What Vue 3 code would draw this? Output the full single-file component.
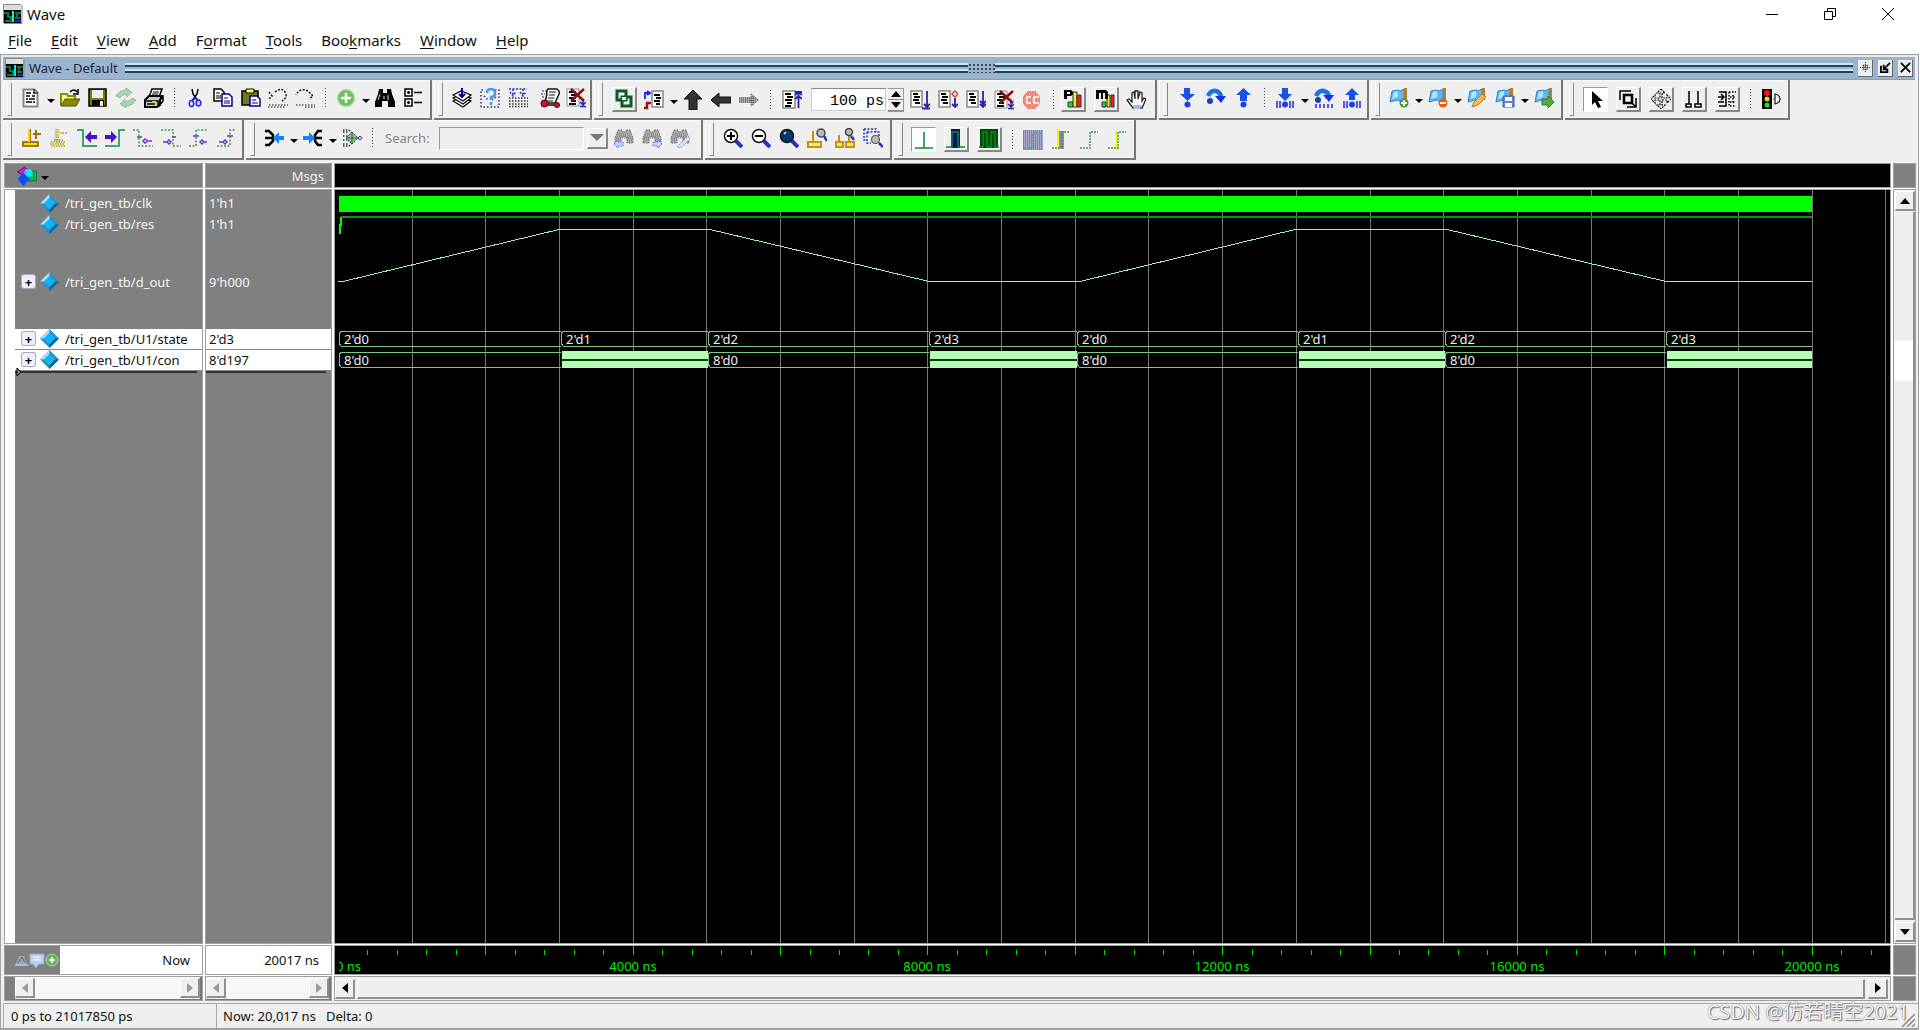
<script setup>
import { ref } from 'vue'

const menus = [
  ['', 'F', 'ile'],
  ['', 'E', 'dit'],
  ['', 'V', 'iew'],
  ['', 'A', 'dd'],
  ['F', 'o', 'rmat'],
  ['', 'T', 'ools'],
  ['Boo', 'k', 'marks'],
  ['', 'W', 'indow'],
  ['', 'H', 'elp']
]

// "|" is a separator, "v" a small drop-down arrow, "*" prefixes a raised button, "_" a pressed one
const topBars = [
  { id: 'file', items: ['doc', 'v', 'open', 'save', 'reload', 'print', '|', 'cut', 'copy', 'paste', 'undo', 'redo', '|', 'add', 'v', 'find', 'tree'] },
  { id: 'compile', items: ['layers', 'ask', 'compileall', 'sim', 'stopsim'] },
  { id: 'simulate', items: ['*env', 'wavedoc', 'v', 'up', 'left', 'right', '|', 'restart', 'time', 'run', 'runcont', 'runall', 'break', 'stop', '|', '*profp', '*profm', 'hand'] },
  { id: 'step', items: ['stepin', 'stepover', 'stepout', '|', 'stepinc', 'v', 'stepoverc', 'stepoutc'] },
  { id: 'mark', items: ['bmadd', 'v', 'bmdel', 'v', 'bmedit', 'bmsave', 'v', 'bmgo'] },
  { id: 'mode', items: ['_pointer', '*zoommode', '*pan', '*cursors', '*edges', '|', 'light'] }
]
const bottomBars = [
  { id: 'cursor', items: ['curadd', 'curdel', 'prevedge', 'nextedge', 'fallprev', 'fallnext', 'riseprev', 'risenext'] },
  { id: 'search', items: ['expand', 'v', 'collapse', 'v', 'expandall', '|', 'searchbox', 'findprev', 'findnext', 'findopt'] },
  { id: 'zoom', items: ['zoomin', 'zoomout', 'zoomfull', 'zoomcur', 'zoomtwo', 'zoomsel'] },
  { id: 'shape', items: ['_shape1', '*shape2', '*shape3', '|', 'shape4', 'shape5', 'shape6', 'shape7'] }
]
const rows = [topBars, bottomBars]
const iconName = (n) => n.replace(/^[*_]/, '')
const kind = (n) => (n[0] === '*' ? 'raised' : n[0] === '_' ? 'pressed' : '')

const runTime = ref('100 ps')
const query = ref('')

const signals = [
  { path: '/tri_gen_tb/clk', value: "1'h1", cls: 'one' },
  { path: '/tri_gen_tb/res', value: "1'h1", cls: 'one' },
  { path: '/tri_gen_tb/d_out', value: "9'h000", cls: 'tall', bus: true },
  { path: '/tri_gen_tb/U1/state', value: "2'd3", cls: 'sel', bus: true },
  { path: '/tri_gen_tb/U1/con', value: "8'd197", cls: 'sel', bus: true }
]

// time axis: x position of a moment given in units of 1000 ns
const x = (t) => Math.round(3 + t * 73.68)
const grid = Array.from({ length: 21 }, (_, i) => i + 1)
const ticks = Array.from({ length: 52 }, (_, i) => ({ x: x((i + 1) * 0.4), major: (i + 1) % 5 === 0 }))
const labels = [4, 8, 12, 16, 20]
const end = x(20)
const analog = [[0, 91], [0.1, 91], [3.02, 39], [5.02, 39], [8, 91], [10.1, 91], [13.02, 39], [15.02, 39], [18, 91], [20, 91]]
  .map(([t, y]) => `${x(t)},${y}`).join(' ')
const edges = [0, 3, 5, 8, 10, 13, 15, 18, 20]
const states = edges.slice(0, -1).map((t, i) => ({
  a: x(t) + (i ? 2 : 1),
  b: i === 7 ? end : x(edges[i + 1]) + 2,
  text: `2'd${i % 4}`,
  busy: i % 2 === 1
}))
const outline = (s, top) => {
  const b = top + 15
  return `M${s.b} ${top}H${s.a + 2}L${s.a} ${top + 3}V${b - 3}L${s.a + 2} ${b}H${s.b}`
}
</script>

<template>
  <svg class="defs" aria-hidden="true">
    <symbol id="wave" viewBox="0 0 20 20"><path d="M1 1h17v18H1z" fill="#000" /><path d="M1 1h17v5H1z" fill="#ddd" /><path d="M1 9h4v4h3v5M12 9h6M12 14h5M2 17h5M14 9v4" stroke="#0a7a3c" stroke-width="2" fill="none" /><path d="M10 7v11" stroke="#0ee" stroke-width="2" /><path d="M12 17h6" stroke="#22c" stroke-width="2" /><path d="M.5 19V.5H18M19 1v18.5H1" stroke="#888" fill="none" /></symbol>
    <symbol id="doc" viewBox="0 0 20 20"><path d="M2.500 1.500h11l3 3v14h-14z" fill="#fff" stroke="#888" stroke-width="2" /><path d="M5 5h5m2 0h2M5 8h4m2 0h3M5 11h2m1 0h6M5 14h6m1 0h2" stroke="#000" stroke-width="1.500" /><path d="M13 1v4h4" stroke="#000" fill="none" /></symbol>
    <symbol id="open" viewBox="0 0 20 20"><path d="M1 18V6h6l1 2h7v4" fill="#ffff9a" stroke="#8a8a00" stroke-width="2" /><path d="M1 18l4-7h15l-4 7z" fill="#8a8a00" stroke="#555500" /><path d="M10 4q4-4 7 0M18 1v5h-5" fill="none" stroke="#000" stroke-width="1.500" /></symbol>
    <symbol id="save" viewBox="0 0 20 20"><path d="M1 1h17v17H1z" fill="#808000" stroke="#000" stroke-width="1.500" /><path d="M4 2h11v8H4z" fill="#efefef" /><path d="M4 12h12v6H4z" fill="#000" /><path d="M12 13h3v5h-3z" fill="#eee" /></symbol>
    <symbol id="reload" viewBox="0 0 20 20"><g fill="#a6d4b2" stroke="#6fb583" stroke-dasharray="2 1"><path d="M0 8q4-6 10-6V0l6 4-5 5V7Q6 6 4 10z" /><path d="M20 12q-4 6-10 6v2l-6-4 5-5v2q5 1 7-3z" /></g></symbol>
    <symbol id="print" viewBox="0 0 20 20"><path d="M5 9l3-8h10l-3 8z" fill="#fff" stroke="#000" stroke-width="1.500" /><path d="M9 4h6M8 6h6" stroke="#000" /><path d="M1 12l4-4h13l-2 4v5l-3 2H1z" fill="#ccc" stroke="#000" stroke-width="2" /><path d="M1 13h13v5M3 16h8M16 12l3-3v4l-4 5" stroke="#000" stroke-width="1.500" fill="none" /><path d="M8 14h4" stroke="#dd0" stroke-width="2" /></symbol>
    <symbol id="cut" viewBox="0 0 20 20"><path d="M7 1l1 5 5 7M13 1l-1 5-5 7" stroke="#000" stroke-width="1.500" fill="none" /><g fill="none" stroke="#22f" stroke-width="1.600"><ellipse cx="6.500" cy="15.500" rx="2.200" ry="3" /><ellipse cx="13.500" cy="15" rx="2.200" ry="3" /><path d="M8 12l2-2 2 2" /></g></symbol>
    <symbol id="copy" viewBox="0 0 20 20"><path d="M1 1h7l3 3v9H1z" fill="#fff" stroke="#000" stroke-width="1.500" /><path d="M3 5h4M3 8h5M3 10h5" stroke="#000" /><path d="M9 6h7l3 3v9H9z" fill="#fff" stroke="#000080" stroke-width="1.500" /><path d="M11 10h4M11 13h6M11 15h6" stroke="#000080" /></symbol>
    <symbol id="paste" viewBox="0 0 20 20"><path d="M1 3h16v14H1z" fill="#77772a" stroke="#000" stroke-width="1.500" /><path d="M5 1h8v4H5z" fill="#ff6" stroke="#000" /><path d="M9 8h7l3 3v7H9z" fill="#fff" stroke="#000080" stroke-width="1.500" /><path d="M11 12h4M11 15h6" stroke="#000080" /></symbol>
    <symbol id="undo" viewBox="0 0 20 20"><path d="M1 4l3 4-3 3M7 4q8-6 11 2 1 4-4 7" fill="none" stroke="#111" stroke-width="1.500" stroke-dasharray="2 1.500" /><path d="M1 17h19M0 19h18" stroke="#111" stroke-width="1.200" stroke-dasharray="1.500 1.500" /></symbol>
    <symbol id="redo" viewBox="0 0 20 20"><path d="M14 4l4 4-4 3M13 3q-8-4-12 4" fill="none" stroke="#111" stroke-width="1.500" stroke-dasharray="2 1.500" /><path d="M1 17h19M10 19h10" stroke="#111" stroke-width="1.200" stroke-dasharray="1.500 1.500" /></symbol>
    <symbol id="add" viewBox="0 0 20 20"><circle cx="10" cy="10" r="8.500" fill="#6fbf5c" stroke="#b4dba8" stroke-width="1.500" /><path d="M10 5v10M5 10h10" stroke="#fff" stroke-width="2.500" /></symbol>
    <symbol id="find" viewBox="0 0 20 20"><path d="M4 1h4v4h4V1h4l1 5 3 8v5h-7v-6H7v6H0v-5l3-8z" fill="#000" /><path d="M3 12l2-6M9 8v3M13 12V7" stroke="#ddd" /></symbol>
    <symbol id="tree" viewBox="0 0 20 20"><path d="M2 1h7v7H2zM2 11h7v7H2z" fill="#fff" stroke="#000" stroke-width="1.500" /><path d="M4 4.500h3M5.500 3v3M4 14.500h3M5.500 13v3M11 4.500h8M11 14.500h8" stroke="#000" stroke-width="1.500" /></symbol>
    <symbol id="layers" viewBox="0 0 20 20"><g fill="#fff" stroke="#000" stroke-width="1.200"><path d="M1 13l8-4 10 4-8 6z" /><path d="M1 10l8-4 10 4-8 6z" /><path d="M1 7l8-4 10 4-8 6z" /></g><path d="M10 0v9M7 6l3 3 3-3" stroke="#000090" stroke-width="2" fill="none" /></symbol>
    <symbol id="ask" viewBox="0 0 20 20"><path d="M1 19V2h4M15 2h4v17H1M4 8l4 4M16 9l-4 3" fill="none" stroke="#335" stroke-width="1.500" stroke-dasharray="1.500 2" /><path d="M7 5q0-4 4-4t4 4-4 4v3m0 2v3" fill="none" stroke="#39a0f0" stroke-width="2.500" /></symbol>
    <symbol id="compileall" viewBox="0 0 20 20"><path d="M1 10h19M1 13h19M1 16h19M1 18.500h19" stroke="#333" stroke-width="1.500" stroke-dasharray="1.500 1.500" /><path d="M5 1v6M15 1v6M2 4l3 4 3-4M12 4l3 4 3-4M1 1h18" stroke="#3030b0" stroke-width="1.500" stroke-dasharray="2 1.500" fill="none" /></symbol>
    <symbol id="sim" viewBox="0 0 20 20"><path d="M8 1h9q3 2 2 5l-4 9H5l2-9q-1-3 1-5z" fill="#fff" stroke="#111" stroke-width="1.500" /><path d="M9 4h7M9 7h6M8 10h6M7 13h6" stroke="#111" /><path d="M2 3h4M1 6h4M2 9h3" stroke="#22a" stroke-dasharray="2 1" /><circle cx="4.500" cy="15.500" r="3.500" fill="#d01030" stroke="#500" /><circle cx="17" cy="17" r="2.500" fill="#d01030" stroke="#500" /><path d="M8 17h6" stroke="#111" stroke-width="1.500" /></symbol>
    <symbol id="stopsim" viewBox="0 0 20 20"><path d="M1 1h12v17H1z" fill="#fff" stroke="#888" /><path d="M3 4h7M5 7h6M3 10h7M5 13h5M3 16h7" stroke="#000" stroke-width="1.800" /><path d="M5 1l13 12M18 1L5 13" stroke="#8b1010" stroke-width="2.500" /><path d="M17 11v6M14 14l3 3 3-3M14 18.500h6" stroke="#22a" stroke-width="1.500" fill="none" /></symbol>
    <symbol id="env" viewBox="0 0 20 20"><path d="M3 2h9v9H3zM8 8h9v9H8z" fill="none" stroke="#0a5c22" stroke-width="3" /><path d="M8 8h4v3H8z" fill="#fff" /></symbol>
    <symbol id="wavedoc" viewBox="0 0 20 20"><path d="M8 1h11v16H8z" fill="#fff" stroke="#888" stroke-width="1.500" /><path d="M10 5h6M12 8h5M10 11h6M12 14h4" stroke="#000" stroke-width="1.800" /><path d="M1 9V3h5M3 1l3 2-3 2" stroke="#22e" stroke-width="1.800" fill="none" /><path d="M0 18h3v-5h4" stroke="#a01010" stroke-width="2.500" fill="none" /></symbol>
    <symbol id="up" viewBox="0 0 20 20"><path d="M10 0l9 9h-5v11H6V9H1z" fill="#333" stroke="#111" /></symbol>
    <symbol id="left" viewBox="0 0 20 20"><path d="M0 10l8-7v4h12v6H8v4z" fill="#333" stroke="#111" /></symbol>
    <symbol id="right" viewBox="0 0 20 20"><path d="M20 10l-8-7v4H0v6h12v4z" fill="#aaa" /><g fill="none" stroke="#555" stroke-dasharray="1 1"><path d="M0 8h17M0 10h20M0 12h17M12 4v12M14 6v9" /></g></symbol>
    <symbol id="restart" viewBox="0 0 20 20"><path d="M1 1h12v17H1z" fill="#fff" stroke="#888" stroke-width="1.500" /><path d="M3 4h6M5 7h6M3 10h7M5 13h5M3 16h6" stroke="#000" stroke-width="1.800" /><path d="M13 2h7M13 5l3.500-3 3.500 3M16.500 3v15M13 9l3.500-3L20 9" stroke="#22a" stroke-width="1.800" fill="none" /></symbol>
    <symbol id="run" viewBox="0 0 20 20"><path d="M1 1h11v16H1z" fill="#fff" stroke="#888" stroke-width="1.500" /><path d="M3 4h5M4 7h6M3 10h6M5 13h5" stroke="#000" stroke-width="1.800" /><path d="M17 1v16M14 14l3 3 3-3M12 18.500h8" stroke="#22a" stroke-width="1.800" fill="none" /></symbol>
    <symbol id="runcont" viewBox="0 0 20 20"><path d="M1 1h11v16H1z" fill="#fff" stroke="#888" stroke-width="1.500" /><path d="M3 4h5M4 7h6M3 10h6M5 13h5" stroke="#000" stroke-width="1.800" /><path d="M17 1l3 3-3 3-3-3z" fill="#fff" stroke="#e33" stroke-width="1.500" /><path d="M17 8v9M14 14l3 3 3-3" stroke="#22a" stroke-width="1.800" fill="none" /></symbol>
    <symbol id="runall" viewBox="0 0 20 20"><path d="M1 1h11v16H1z" fill="#fff" stroke="#888" stroke-width="1.500" /><path d="M3 4h5M4 7h6M3 10h6M5 13h5" stroke="#000" stroke-width="1.800" /><path d="M17 1v16M14 11l3 3 3-3M14 14l3 3 3-3" stroke="#22a" stroke-width="1.800" fill="none" /></symbol>
    <symbol id="break" viewBox="0 0 20 20"><path d="M1 1h12v17H1z" fill="#fff" stroke="#888" /><path d="M3 4h7M5 7h6M3 10h7M5 13h5M3 16h7" stroke="#000" stroke-width="1.800" /><path d="M6 1l13 12M19 1L6 13" stroke="#8b1010" stroke-width="2.500" /><path d="M17 11v6M14 14l3 3 3-3M14 18.500h6" stroke="#22a" stroke-width="1.500" fill="none" /></symbol>
    <symbol id="stop" viewBox="0 0 20 20"><path d="M6 1h7l5 5v8l-5 5H6l-5-5V6z" fill="#f7a99c" /><g fill="none" stroke="#e8482e" stroke-width="1.200" stroke-dasharray="1.500 1"><path d="M5 2h9M3 4h13M2 6h15M1 8h17M1 10h17M1 12h17M2 14h15M3 16h13M5 18h9" /></g><path d="M9 7H5v6h4M17 7h-5v6h5" stroke="#fff" stroke-width="1.500" fill="none" /></symbol>
    <symbol id="profp" viewBox="0 0 20 20"><path d="M5 13h5v5H5z" fill="#1d3" stroke="#333" /><path d="M10 3h4v15h-4z" fill="#ee2" stroke="#333" /><path d="M14 6h4v12h-4z" fill="#e22" stroke="#333" /><path d="M1 1h6q3 0 3 3t-3 3H4v3H1z" fill="#000" /><path d="M4 3h3v2H4z" fill="#fff" /></symbol>
    <symbol id="profm" viewBox="0 0 20 20"><path d="M6 13h4v5H6z" fill="#1d3" stroke="#333" /><path d="M11 6h3v12h-3z" fill="#ee2" stroke="#333" /><path d="M15 6h3v12h-3z" fill="#e22" stroke="#333" /><path d="M0 1h10l2 2v7H9V4H7v6H5V4H3v6H0z" fill="#000" /></symbol>
    <symbol id="hand" viewBox="0 0 20 20"><path d="M7 18L1 10l2-1 3 3V3l2-1 1 7V1h3v8l2-7 2 1v8l2-3 2 1-4 9z" fill="#fff" stroke="#222" stroke-width="1.300" /><path d="M7 15h9l-2 4H8z" fill="#9bc0ea" /></symbol>
    <symbol id="stepin" viewBox="0 0 20 20"><path d="M6 0h6v6h5l-7.500 7L2 6h4z" fill="#1b50e8" /><circle cx="9.500" cy="16.500" r="3" fill="#1b40e8" /></symbol>
    <symbol id="stepover" viewBox="0 0 20 20"><path d="M2 8q3-6 8-5 4 1 5 6" fill="none" stroke="#1b70f0" stroke-width="4.500" /><path d="M9 8h11l-5 7z" fill="#1b30e0" /><circle cx="4" cy="13" r="3" fill="#1b40a8" /></symbol>
    <symbol id="stepout" viewBox="0 0 20 20"><path d="M9.500 0L17 7h-4v6H6V7H2z" fill="#1b50e8" /><circle cx="9.500" cy="16.500" r="3" fill="#1b40e8" /></symbol>
    <symbol id="stepinc" viewBox="0 0 20 20"><path d="M7 0h6v6h4l-7 7-7-7h4z" fill="#1b50e8" /><circle cx="10" cy="16.500" r="3" fill="#1b40e8" /><path d="M2 13v7M5 13v7M15 13v7M18 13v7" stroke="#22e" stroke-width="1.500" /></symbol>
    <symbol id="stepoverc" viewBox="0 0 20 20"><path d="M2 8q3-6 8-5 4 1 5 5" fill="none" stroke="#1b70f0" stroke-width="4.500" /><path d="M9 7h11l-5 7z" fill="#1b30e0" /><circle cx="4" cy="12" r="3" fill="#1b40a8" /><path d="M2 16v4M6 16v4M10 16v4M14 16v4M18 16v4" stroke="#22e" stroke-width="1.500" /></symbol>
    <symbol id="stepoutc" viewBox="0 0 20 20"><path d="M10 0l7 7h-4v5H7V7H3z" fill="#1b50e8" /><circle cx="10" cy="16.500" r="3" fill="#1b40e8" /><path d="M2 13v7M5 13v7M15 13v7M18 13v7" stroke="#22e" stroke-width="1.500" /></symbol>
    <symbol id="flag" viewBox="0 0 20 20"><path d="M3 3l6-1 2 1 4-2v11l-4 1-3-1-7 2z" fill="#62b6f2" stroke="#2b86cc" /><path d="M5 4l4-1v6l-6 2z" fill="#b8e2ff" /><path d="M15 0h3v12h-3z" fill="#b87a30" /></symbol>
    <symbol id="bmadd" viewBox="0 0 20 20"><use href="#flag" /><circle cx="15" cy="15" r="4.500" fill="#3f9a35" /><path d="M15 12v6M12 15h6" stroke="#fff" stroke-width="1.800" /></symbol>
    <symbol id="bmdel" viewBox="0 0 20 20"><use href="#flag" /><circle cx="15" cy="15" r="4.500" fill="#ea5a14" /><path d="M12 15h6" stroke="#fff" stroke-width="1.800" /></symbol>
    <symbol id="bmedit" viewBox="0 0 20 20"><use href="#flag" /><path d="M5 19l2-5 8-8 4 3-8 8z" fill="#f4b942" stroke="#c07d1c" /></symbol>
    <symbol id="bmsave" viewBox="0 0 20 20"><use href="#flag" /><path d="M8 8h11v11H8z" fill="#5d86cc" stroke="#3b62a8" /><path d="M10 9h7v4h-7zM10 15h7v4h-7z" fill="#fff" /></symbol>
    <symbol id="bmgo" viewBox="0 0 20 20"><use href="#flag" /><path d="M8 11h6V8l6 6-6 6v-3H8z" fill="#52ab42" stroke="#2f7d25" /></symbol>
    <symbol id="pointer" viewBox="0 0 20 20"><path d="M6 2v14l3-3 3 6 3-1-3-6h5z" fill="#000" /></symbol>
    <symbol id="zoommode" viewBox="0 0 20 20"><path d="M2 11V2h11" stroke="#000" stroke-width="1.500" fill="none" /><path d="M6 6h8v8H6z" stroke="#000" stroke-width="2.500" fill="none" /><path d="M18 9v9H9M14 14l4 4" stroke="#000" stroke-width="1.500" fill="none" /></symbol>
    <symbol id="pan" viewBox="0 0 20 20"><path d="M10 0l4 4h-3v5h5V6l4 4-4 4v-3h-5v5h3l-4 4-4-4h3v-5H4v3l-4-4 4-4v3h5V4H6z" fill="none" stroke="#111" stroke-width="1.200" stroke-dasharray="2 1" /></symbol>
    <symbol id="cursors" viewBox="0 0 20 20"><path d="M5 2v13M14 2v13" stroke="#000" stroke-width="1.500" /><path d="M2 15h5v3H2zM11 15h6v3h-6z" fill="#fff" stroke="#000" stroke-width="1.500" /></symbol>
    <symbol id="edges" viewBox="0 0 20 20"><path d="M2 3h7v14H2M1 8h6M4 5l3 3-3 3M1 13h6" stroke="#000" stroke-width="1.500" fill="none" /><path d="M12 3h7M12 3v14h7M13 8h6M13 13h6M16 6v9" stroke="#000" stroke-width="1.500" fill="none" stroke-dasharray="1.500 1.500" /></symbol>
    <symbol id="light" viewBox="0 0 20 20"><path d="M1 0h10v20H1z" fill="#000" /><circle cx="6" cy="4" r="3" fill="#f11" /><circle cx="6" cy="10" r="2.500" fill="#ec2" /><circle cx="6" cy="16" r="2.500" fill="#2d4" /><path d="M14 5q5 1 5 5t-5 5z" fill="#fff" stroke="#111" stroke-width="1.200" /><path d="M12 10h1m6 0h1" stroke="#07a" /></symbol>
    <symbol id="curadd" viewBox="0 0 20 20"><path d="M9 1v13M12 6h8M15 2v9" stroke="#9a7000" stroke-width="2" /><path d="M2 14h15v4H2z" fill="#ffd800" stroke="#7a5a00" stroke-width="1.500" /><path d="M8 1v13" stroke="#ffd800" stroke-width="2" /></symbol>
    <symbol id="curdel" viewBox="0 0 20 20"><g fill="none" stroke="#b89a10" stroke-width="1.500" stroke-dasharray="1.500 1"><path d="M9 1v13M7 1v12M11 5h8M2 14h15M1 16h15M2 18h15M5 12h9" /></g></symbol>
    <symbol id="prevedge" viewBox="0 0 20 20"><path d="M0 2h6v16h14" stroke="#0a8a3c" stroke-width="1.500" fill="none" /><path d="M8 9l6-6v4h6v4h-6v4z" fill="#4a10d0" /></symbol>
    <symbol id="nextedge" viewBox="0 0 20 20"><path d="M0 18h14V2h6" stroke="#0a8a3c" stroke-width="1.500" fill="none" /><path d="M12 9L6 3v4H0v4h6v4z" fill="#4a10d0" /></symbol>
    <symbol id="fallprev" viewBox="0 0 20 20"><path d="M0 2h6v16h14" stroke="#3a9a50" stroke-width="1.500" stroke-dasharray="2 1.500" fill="none" /><path d="M4 9h5M12 11l3 2-3 2-2-2zM16 13h3" stroke="#63c" stroke-width="1.500" fill="none" /></symbol>
    <symbol id="fallnext" viewBox="0 0 20 20"><path d="M0 2h12v16h8" stroke="#3a9a50" stroke-width="1.500" stroke-dasharray="2 1.500" fill="none" /><path d="M2 14h4l2-2 2 2-2 2-2-2M11 9h4" stroke="#63c" stroke-width="1.500" fill="none" /></symbol>
    <symbol id="riseprev" viewBox="0 0 20 20"><path d="M0 18h7V2h12" stroke="#3a9a50" stroke-width="1.500" stroke-dasharray="2 1.500" fill="none" /><path d="M4 8h6M11 14l2-2 2 2-2 2zM15 14h3" stroke="#63c" stroke-width="1.500" fill="none" /></symbol>
    <symbol id="risenext" viewBox="0 0 20 20"><path d="M0 18h13V2h6" stroke="#3a9a50" stroke-width="1.500" stroke-dasharray="2 1.500" fill="none" /><path d="M2 14h4l2-2 2 2-2 2-2-2M10 8h6" stroke="#63c" stroke-width="1.500" fill="none" /></symbol>
    <symbol id="expand" viewBox="0 0 20 20"><path d="M1 3h4l4 4v6l-4 4H1M1 10h8" stroke="#000" stroke-width="2.500" fill="none" /><path d="M9 10l6-6v4h5v4h-5v4z" fill="#1284ff" /></symbol>
    <symbol id="collapse" viewBox="0 0 20 20"><path d="M19 3h-4l-3 4v6l3 4h4M12 10h7" stroke="#000" stroke-width="2.500" fill="none" /><path d="M12 10L6 4v4H0v4h6v4z" fill="#1284ff" /></symbol>
    <symbol id="expandall" viewBox="0 0 20 20"><path d="M1 2h6l3 3M1 18h6l3-3M1 8h5M1 12h5M1 4h5M1 16h5" stroke="#333" stroke-width="1.500" stroke-dasharray="1.500 1.500" fill="none" /><path d="M10 4l6 6-6 6-6-6z" fill="#8ac890" stroke="#333" stroke-dasharray="2 1" /><path d="M10 5v10M5 10h10" stroke="#264" /><path d="M18 8l2 2-2 2-2-2z" fill="none" stroke="#22e" /></symbol>
    <symbol id="glass" viewBox="0 0 20 20"><path d="M4 2h4v2h4V2h4l3 8v5h-6V9H7v6H1v-5z" fill="#aaa" stroke="#666" stroke-dasharray="1.500 1" /><path d="M3 6h14M3 8h14M2 10h16M2 12h5M13 12h5" stroke="#777" stroke-dasharray="1 1" /></symbol>
    <symbol id="findprev" viewBox="0 0 20 20"><use href="#glass" /><path d="M0 16l4-4v2h5v4H4v2z" fill="#c8d4ff" stroke="#46f" stroke-dasharray="1.500 1" /></symbol>
    <symbol id="findnext" viewBox="0 0 20 20"><use href="#glass" /><path d="M20 16l-4-4v2h-5v4h5v2z" fill="#c8d4ff" stroke="#46f" stroke-dasharray="1.500 1" /></symbol>
    <symbol id="findopt" viewBox="0 0 20 20"><use href="#glass" /><path d="M7 19L18 8l2 3-9 9z" fill="#cde4f8" stroke="#8ab" stroke-dasharray="2 1" /></symbol>
    <symbol id="zoomin" viewBox="0 0 20 20"><path d="M13 13l6 6" stroke="#2233cc" stroke-width="4" /><circle cx="8" cy="8" r="6.500" fill="#fff" stroke="#111" stroke-width="1.500" /><path d="M4 8h8M8 4v8" stroke="#000" stroke-width="2" /></symbol>
    <symbol id="zoomout" viewBox="0 0 20 20"><path d="M13 13l6 6" stroke="#2233cc" stroke-width="4" /><circle cx="8" cy="8" r="6.500" fill="#fff" stroke="#111" stroke-width="1.500" /><path d="M4 8h8" stroke="#000" stroke-width="2" /></symbol>
    <symbol id="zoomfull" viewBox="0 0 20 20"><path d="M13 13l6 6" stroke="#2233cc" stroke-width="4" /><circle cx="8" cy="8" r="6.500" fill="#003a70" stroke="#111" stroke-width="1.500" /><path d="M5 6l2-2" stroke="#fff" stroke-width="1.500" /></symbol>
    <symbol id="zoomcur" viewBox="0 0 20 20"><path d="M6 3v11M1 14h13v5H1z" fill="#ffe680" stroke="#c89200" stroke-width="2" /><path d="M17 8l3 5" stroke="#23c" stroke-width="2.500" /><circle cx="14" cy="5" r="4" fill="#bbb" stroke="#444" stroke-width="1.500" /></symbol>
    <symbol id="zoomtwo" viewBox="0 0 20 20"><path d="M4 7v7M14 7v7M1 14h7v5H1zM11 14h8v5h-8z" fill="#ffe680" stroke="#c89200" stroke-width="2" /><path d="M16 8l3 4" stroke="#23c" stroke-width="2.500" /><circle cx="14" cy="4" r="3.500" fill="#bbb" stroke="#444" stroke-width="1.500" /></symbol>
    <symbol id="zoomsel" viewBox="0 0 20 20"><path d="M1 1h12v3M1 1v11h3M4 4h12v4M4 4v11h4" stroke="#33a" stroke-width="1.500" stroke-dasharray="2 1.500" fill="none" /><path d="M16 15l4 4" stroke="#23c" stroke-width="2.500" /><circle cx="12.500" cy="11.500" r="4" fill="#bbb" stroke="#555" stroke-width="1.200" /></symbol>
    <symbol id="shape1" viewBox="0 0 20 20"><path d="M10 2v16M1 18h18" stroke="#0a8a2c" stroke-width="1.500" /></symbol>
    <symbol id="shape2" viewBox="0 0 20 20"><path d="M5 0h9v19H5z" fill="#101070" /><path d="M0 18h6V3h6v15h7" stroke="#0a8a2c" stroke-width="1.500" fill="none" /></symbol>
    <symbol id="shape3" viewBox="0 0 20 20"><path d="M1 0h18v19H1z" fill="#004a00" /><path d="M0 18h4V3h4v15h4V3h4v15h4" stroke="#0a8a2c" stroke-width="1.500" fill="none" /></symbol>
    <symbol id="shape4" viewBox="0 0 20 20"><path d="M0 0h20v20H0z" fill="#a8a8cc" /><g stroke="#5a5a9a" stroke-width="1" stroke-dasharray="1 1"><path d="M0 1h20M0 3h20M0 5h20M0 7h20M0 9h20M0 11h20M0 13h20M0 15h20M0 17h20M0 19h20" /></g><path d="M1 18h9V3h9" stroke="#5a9a7a" stroke-width="1.500" fill="none" stroke-dasharray="2 1" /></symbol>
    <symbol id="shape5" viewBox="0 0 20 20"><path d="M7 1h6v18H7z" fill="#8a8ab8" /><path d="M7 0v20" stroke="#fe0" stroke-width="2" /><path d="M1 18h7M11 18V2h7" stroke="#3a9a50" stroke-width="1.500" fill="none" stroke-dasharray="2 1" /></symbol>
    <symbol id="shape6" viewBox="0 0 20 20"><path d="M1 18h10V2h8" stroke="#3a9a50" stroke-width="1.500" fill="none" stroke-dasharray="2 1" /></symbol>
    <symbol id="shape7" viewBox="0 0 20 20"><path d="M10 1v18" stroke="#fe0" stroke-width="2" /><path d="M1 18h10V2h8" stroke="#3a9a50" stroke-width="1.500" fill="none" stroke-dasharray="2 1" /></symbol>
    <symbol id="gem" viewBox="0 0 20 20"><path d="M10 0l10 10-10 10L0 10z" fill="#2392cf" /><path d="M10 0v10H0z" fill="#a8ddf2" /><path d="M10 20l10-10H10z" fill="#0c6290" /><path d="M10 4l6 6-6 6-6-6z" fill="#14b4f4" /></symbol>
  </svg>

  <div class="window">
    <header class="titlebar">
      <svg class="logo"><use href="#wave" /></svg>
      <h1>Wave</h1>
      <button class="caption" aria-label="Minimize"><svg viewBox="0 0 14 14"><path d="M1 7.500h12" /></svg></button>
      <button class="caption" aria-label="Restore"><svg viewBox="0 0 14 14"><path d="M1.500 4.500h8v8h-8zM4.500 4V1.500h8v8H10" /></svg></button>
      <button class="caption" aria-label="Close"><svg viewBox="0 0 14 14"><path d="M1 1l12 12M13 1L1 13" /></svg></button>
    </header>

    <nav class="menubar">
      <button v-for="m in menus" :key="m.join('')">{{ m[0] }}<u>{{ m[1] }}</u>{{ m[2] }}</button>
    </nav>

    <main class="dock">
      <div class="docktitle">
        <svg class="logo"><use href="#wave" /></svg>
        <h2>Wave - Default</h2>
        <span class="grip"></span>
        <span class="dots"></span>
        <span class="grip"></span>
        <button aria-label="Zoom pane"><svg viewBox="0 0 12 12"><path d="M6 0v12M0 6h12M4 3v6M8 3v6M3 4h6M3 8h6" stroke="#000" stroke-dasharray="1 1" /></svg></button>
        <button aria-label="Dock"><svg viewBox="0 0 12 12"><path d="M1 4v7h7V8M11 1L5 7M4 3v5h5" stroke="#000" stroke-width="2" fill="none" /></svg></button>
        <button aria-label="Close pane"><svg viewBox="0 0 12 12"><path d="M1 1l10 10M11 1L1 11" stroke="#000" stroke-width="2" /></svg></button>
      </div>

      <div v-for="(bars, r) in rows" :key="r" class="toolrow">
        <div v-for="bar in bars" :key="bar.id" class="bar" :class="bar.id" role="toolbar">
          <template v-for="(it, i) in bar.items" :key="i">
            <span v-if="it === '|'" class="sep"></span>
            <button v-else-if="it === 'v'" class="caret" aria-label="More"></button>
            <div v-else-if="it === 'time'" class="time">
              <input v-model="runTime" aria-label="Run length" />
              <div class="spin"><button aria-label="Longer"></button><button class="down" aria-label="Shorter"></button></div>
            </div>
            <div v-else-if="it === 'searchbox'" class="searchbox">
              <label for="q">Search:</label>
              <input id="q" v-model="query" />
              <button class="drop" aria-label="Search history"><i></i></button>
            </div>
            <button v-else class="tool" :class="[kind(it), iconName(it)]" :aria-label="iconName(it)"><svg><use :href="'#' + iconName(it)" /></svg></button>
          </template>
        </div>
      </div>

      <section class="panes">
        <div class="cell head">
          <svg class="shapes" viewBox="0 0 20 20"><path d="M1 6l7-5 6 5-6 4z" fill="#c020e0" stroke="#707" /><path d="M12 5h8v10h-8z" fill="#18b040" stroke="#075" /><circle cx="12" cy="7" r="4" fill="#0ef" /><path d="M7 7l6 6-6 7-6-7z" fill="#0a50ee" /></svg>
          <button class="caret" aria-label="Columns"></button>
        </div>
        <div class="cell head msgs">Msgs</div>
        <div class="cell black"></div>
        <div class="cell head"></div>

        <div class="cell names">
          <div v-for="s in signals" :key="s.path" class="sig" :class="s.cls">
            <button v-if="s.bus" class="plus" aria-label="Expand signal">+</button>
            <span v-else class="noplus"></span>
            <svg class="gem"><use href="#gem" /></svg>
            <span>{{ s.path }}</span>
          </div>
          <div class="insert"><svg viewBox="0 0 6 10"><path d="M1 1l4 4-4 4z" fill="#888" stroke="#000" /></svg></div>
        </div>
        <div class="cell values">
          <div v-for="s in signals" :key="s.path" class="sig" :class="s.cls">{{ s.value }}</div>
          <div class="insert"></div>
        </div>
        <div class="cell black">
          <svg class="trace">
            <path v-for="g in grid" :key="g" :d="`M${x(g)}.5 0V4000`" stroke="#767676" />
            <rect x="4" y="6" :width="end - 4" height="16" fill="#0f0" />
            <path :d="`M5 44V34M6 36V27`" fill="none" stroke="#0f0" stroke-width="2" />
            <path :d="`M6 27H${end}`" fill="none" stroke="#00a000" stroke-width="2" />
            <polyline :points="analog" fill="none" stroke="#a8f0a8" />
            <template v-for="s in states" :key="s.a">
              <path :d="outline(s, 141)" class="bus" />
              <path v-if="!s.busy" :d="outline(s, 162)" class="bus" />
              <template v-else>
                <rect :x="s.a + 1" y="161" :width="s.b - s.a - 1" height="17" fill="#b4ffb4" />
                <path :d="`M${s.a} 170H${s.b}`" stroke="#103810" stroke-width="2" />
              </template>
              <text :x="s.a + 5" y="154">{{ s.text }}</text>
              <text v-if="!s.busy" :x="s.a + 5" y="175">8'd0</text>
            </template>
          </svg>
        </div>
        <div class="cell vbar">
          <button class="arrow up" aria-label="Scroll up"></button>
          <div class="vthumb"><i></i></div>
          <button class="arrow dn" aria-label="Scroll down"></button>
        </div>

        <div class="cell now"><div class="nowicons"><svg viewBox="0 0 46 18"><path d="M2 13l3-8h5l3 8z" fill="#a4a4a8" /><path d="M4 12l4-6 3 6" stroke="#666" fill="none" /><path d="M1 14h13" stroke="#9cc0ee" stroke-width="2" /><path d="M16 3h14v10h-5l-3 4-3-4h-3z" fill="#b9d0f0" stroke="#88a8dd" /><path d="M19 6h8M19 9h8" stroke="#fff" /><circle cx="38" cy="9" r="6" fill="#62b850" stroke="#a8dca0" /><path d="M38 6v6M35 9h6" stroke="#fff" stroke-width="2" /></svg></div><span>Now</span></div>
        <div class="cell now"><span>20017 ns</span></div>
        <div class="cell black">
          <svg class="trace">
            <path v-for="t in ticks" :key="t.x" :d="`M${t.x}.5 ${t.major ? 0 : 4}V9`" stroke="#00e000" />
            <text v-for="l in labels" :key="l" class="axis" text-anchor="middle" :x="x(l)" y="25">{{ l * 1000 }} ns</text>
            <text class="axis" text-anchor="end" x="26" y="25">0 ns</text>
            <rect width="4" height="28" fill="#000" />
          </svg>
        </div>
        <div class="cell head"></div>

        <div class="cell hbar off inset"><button class="arrow lf" aria-label="Scroll left"></button><div class="track"></div><button class="arrow rt" aria-label="Scroll right"></button></div>
        <div class="cell hbar off"><button class="arrow lf" aria-label="Scroll left"></button><div class="track"></div><button class="arrow rt" aria-label="Scroll right"></button></div>
        <div class="cell hbar"><button class="arrow lf" aria-label="Scroll left"></button><div class="thumb"></div><button class="arrow rt" aria-label="Scroll right"></button></div>
        <div class="cell head"></div>
      </section>

      <footer class="status">
        <span class="range">0 ps to 21017850 ps</span>
        <span class="sim">Now: 20,017 ns&nbsp;&nbsp; Delta: 0</span>
        <svg class="resize" viewBox="0 0 14 14"><path d="M1 14L14 1M6 14l8-8M11 14l3-3" stroke="#888" stroke-width="1.500" /></svg>
        <span class="credit">CSDN @仿若晴空2021</span>
      </footer>
    </main>
  </div>
</template>

<style>
body { background: #fff; }
</style>

<style scoped>
* { box-sizing: border-box; }
.defs { position: absolute; width: 0; height: 0; }
button { border: 0; padding: 0; margin: 0; background: none; font: inherit; color: inherit; flex: none; }
input { border: 0; outline: 0; min-width: 0; }
h1, h2 { margin: 0; font-weight: 400; }
.window { display: flex; flex-direction: column; min-height: 100vh; font-family: "Noto Sans", "Noto Sans CJK SC", sans-serif; font-size: 13px; color: #111; }

.titlebar { display: flex; align-items: center; height: 28px; padding: 0 3px; }
.logo { width: 20px; height: 20px; flex: none; }
.titlebar h1 { flex: 1; font-size: 15px; margin-left: 4px; }
.caption { width: 58px; height: 28px; display: grid; place-items: center; }
.caption svg { width: 14px; height: 14px; fill: none; stroke: #000; }
.menubar { display: flex; gap: 19px; height: 26px; padding-left: 8px; font-size: 15px; line-height: 24px; }
.menubar button { align-self: flex-start; }
.menubar u { text-underline-offset: 2px; }

.dock { flex: 1; display: flex; flex-direction: column; background: #efefef; border: solid #a0a0a0; border-width: 1px 1px 2px; margin-right: 1px; }
.docktitle { display: flex; align-items: center; height: 25px; background: #99b4d1; border-top: 2px solid #e8e8e8; border-bottom: 1px solid #999; margin: 0 3px 0 2px; padding: 0 2px; }
.docktitle h2 { font-size: 13px; margin: 0 7px 0 4px; color: #223; }
.grip { height: 10px; flex: 61; border: solid #2c3e50; border-width: 0 0 2px; background: linear-gradient(#bfe8f8 0 2px, #2c3e50 2px 4px, #99b4d1 4px 6px, #bfe8f8 6px 8px); }
.grip + .dots { width: 27px; height: 10px; flex: none; background: radial-gradient(circle, #445 1px, transparent 1px) 0 0 / 4px 4px; }
.dots + .grip { flex: 62; margin-right: 5px; }
.docktitle button { width: 15px; height: 17px; margin-right: 5px; background: #eee; display: grid; place-items: center; border-right: 1px solid #666; border-bottom: 1px solid #666; }
.docktitle button:last-child { margin-right: 0; }
.docktitle button svg { width: 11px; height: 11px; }

.toolrow { display: flex; gap: 2px; height: 40px; padding-left: 2px; }
.bar { display: flex; align-items: center; flex: none; position: relative; border: solid #777; border-width: 0 2px 2px 0; padding: 0 0 2px 14px; box-shadow: inset 1px 1px #fff; }
.bar::before { content: ""; position: absolute; left: 4px; top: 3px; bottom: 2px; width: 3px; border: solid #888; border-width: 0 1px 1px 0; border-left: 1px solid #fff; }
.tool { width: 28px; height: 28px; display: grid; place-items: center; }
.tool svg { width: 20px; height: 20px; display: block; }
.undo { width: 26px; }
.sep { width: 13px; height: 20px; flex: none; background: repeating-linear-gradient(#444 0 1px, transparent 1px 3px) center / 1px 100% no-repeat; }
.caret { width: 11px; height: 28px; display: grid; place-items: center; }
.caret::before { content: ""; border: solid transparent; border-width: 4px 4px 0; border-top-color: #000; margin-top: 5px; }
.raised, .pressed { width: 25px; height: 25px; margin-right: 8px; }
.raised { border: 1px solid #fff; border-right: 2px solid #888; border-bottom: 2px solid #888; }
.pressed { background: #fff; border: 1px solid #999; border-right-color: #fff; border-bottom-color: #fff; }
.file { width: 429px; }
.compile { width: 158px; }
.simulate { width: 563px; padding-left: 18px; padding-top: 3px; }
.simulate .env { margin-right: 3px; }
.simulate .profm { margin-right: 3px; }
.simulate .sep { width: 15px; }
.step { width: 210px; }
.step .tool:first-child { margin-left: 1px; }
.mark { width: 192px; padding-left: 14px; }
.mode { width: 225px; padding-left: 18px; padding-top: 2px; }
.mode .edges { margin-right: 4px; }
.cursor { width: 241px; }
.search { width: 457px; }
.zoom { width: 187px; }
.shape { width: 242px; padding-left: 17px; padding-top: 3px; }
.shape .shape3 { margin-right: 4px; }
.time { display: flex; align-items: center; margin: 0 2px 0 5px; }
.time input { width: 75px; height: 23px; text-align: right; font: 15px "Liberation Mono", monospace; background: #fff; border: 1px solid #ccc; border-top-color: #888; padding: 3px 1px 0 0; }
.spin { width: 17px; height: 24px; display: flex; flex-direction: column; margin-left: 1px; border: 1px solid #999; border-left-color: #fff; }
.spin button { flex: 1; display: grid; place-items: center; border-bottom: 1px solid #888; }
.spin button::before, .arrow::before { content: ""; border: solid transparent; border-width: 0 5px 6px; border-bottom-color: #000; }
.spin .down::before { transform: rotate(180deg); }
.searchbox { display: flex; align-items: center; margin: 0 2px 0 6px; }
.searchbox label { width: 54px; color: #848484; }
.searchbox input { width: 145px; height: 23px; background: #efefef; border: 1px solid #999; border-right-color: #fff; border-bottom-color: #fff; }
.drop { width: 21px; height: 21px; margin-left: 3px; border: 1px solid #fff; border-right: 2px solid #888; border-bottom: 2px solid #888; display: grid; place-items: center; }
.drop i { border: solid transparent; border-width: 7px 7px 0; border-top-color: #777; }

.panes { flex: 1; display: grid; grid-template-columns: 197px 125px minmax(0, 1fr) 21px; grid-template-rows: 23px minmax(200px, 1fr) 28px 23px; gap: 3px 4px; margin: 4px 3px 0 3px; padding: 0 0 0 1px; background: #fff; }
.cell { min-width: 0; box-shadow: 0 0 0 1px #a0a0a0; background: #808080; overflow: hidden; }
.head { display: flex; align-items: center; padding-left: 11px; color: #f4f4f4; }
.shapes { width: 21px; height: 20px; }
.head .caret { margin-left: 2px; }
.msgs { justify-content: flex-end; padding-right: 7px; }
.black { background: #000; }
.names { border-left: 10px solid #fff; overflow: visible; color: #f4f4f4; }
.values { color: #f4f4f4; }
.names .sig { padding-left: 7px; }
.values .sig { padding-left: 3px; }
.sig { display: flex; align-items: center; height: 21px; padding-bottom: 1px; white-space: nowrap; }
.names .sig:first-child, .values .sig:first-child { margin-top: 3px; }
.tall { height: 94px; }
.sel { background: #fff; color: #111; border-bottom: 1px solid #888; }
.gem { width: 19px; height: 19px; flex: none; margin: 0 6px 0 5px; }
.plus { width: 13px; height: 13px; background: #eef; border-radius: 2px; box-shadow: 0 0 0 1px #aab; color: #000; line-height: 12px; font-weight: 700; }
.noplus { width: 13px; }
.insert { height: 2px; margin-right: 5px; background: #333; position: relative; }
.insert svg { position: absolute; width: 6px; height: 10px; left: 1px; top: -4px; }
.trace { display: block; width: 100%; height: 100%; font-size: 13px; shape-rendering: crispEdges; }
.trace text { fill: #f0f0f0; }
.trace .axis { fill: #00e800; }
.bus { fill: none; stroke: #7cc87c; stroke-width: 1; }

.now { background: #fff; display: flex; align-items: center; justify-content: flex-end; padding-right: 12px; }
.nowicons { background: #808080; width: 55px; align-self: stretch; margin-right: auto; display: flex; align-items: center; justify-content: flex-end; }
.nowicons svg { width: 46px; height: 18px; }
.arrow { display: grid; place-items: center; width: 20px; height: 20px; background: #efefef; border: 1px solid #fff; border-right: 2px solid #909090; border-bottom: 2px solid #909090; }
.lf::before { transform: rotate(-90deg); }
.rt::before { transform: rotate(90deg); }
.dn::before { transform: rotate(180deg); }
.hbar { display: flex; align-items: center; background: #efefef; }
.off { border-right: 2px solid #777; border-bottom: 1px solid #777; }
.off .arrow::before { border-bottom-color: #999; }
.inset { border-left: 10px solid #808080; }
.track { flex: 1; align-self: stretch; background: #f7f7f7; }
.thumb { flex: 1; height: 20px; margin: 0 3px 0 2px; border: 1px solid #fff; border-right: 2px solid #909090; border-bottom: 2px solid #909090; }
.hbar:not(.off) .rt { margin-right: 2px; }
.vbar { display: flex; flex-direction: column; background: #efefef; padding: 1px 0 1px 1px; }
.vthumb { flex: 1; margin: 1px 0 2px; border-right: 2px solid #909090; border-bottom: 2px solid #909090; }
.vthumb i { display: block; height: 40px; margin-top: 129px; background: #fff; }

.status { display: flex; height: 25px; margin: 3px 0 0 2px; line-height: 24px; position: relative; }
.status span { border: solid #aaa; border-width: 1px 0 0 1px; }
.range { width: 213px; padding-left: 7px; }
.sim { flex: 1; padding-left: 6px; white-space: pre; }
.resize { position: absolute; right: 3px; bottom: 1px; width: 14px; height: 14px; }
.status .credit { position: absolute; right: 9px; top: -4px; border: 0; font-size: 20px; line-height: 26px; color: #f4f4f4; text-shadow: 0 0 1px #555, 1px 1px 1px #777; }
</style>
